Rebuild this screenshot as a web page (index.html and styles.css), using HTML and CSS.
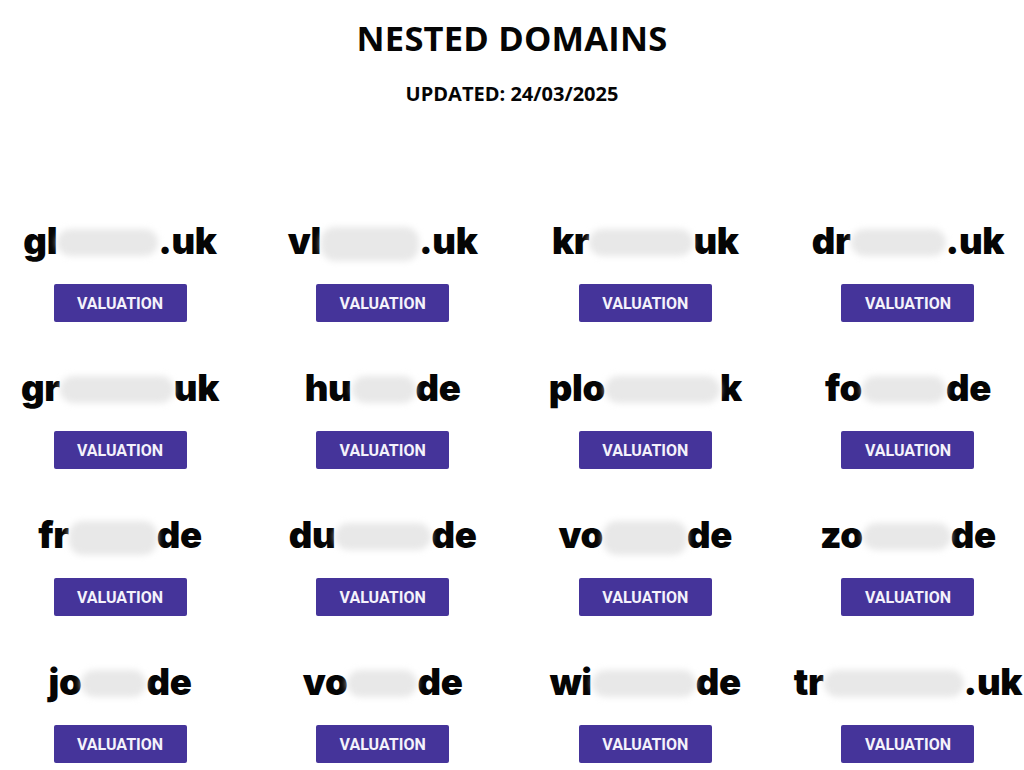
FILE: index.html
```html
<!DOCTYPE html>
<html lang="en">
<head>
<meta charset="utf-8">
<title>Nested Domains</title>
<link rel="stylesheet" href="styles.css">
</head>
<body>
<header class="page-head">
  <h1 class="title">NESTED DOMAINS</h1>
  <p class="updated">UPDATED: 24/03/2025</p>
</header>
<main class="grid">
  <div class="item"><div class="domain">gl<span class="mask" style="width:101px"></span>.uk</div><a class="btn">VALUATION</a></div>
  <div class="item"><div class="domain">vl<span class="mask tall" style="width:98px"></span>.uk</div><a class="btn">VALUATION</a></div>
  <div class="item"><div class="domain">kr<span class="mask" style="width:104px"></span>uk</div><a class="btn">VALUATION</a></div>
  <div class="item"><div class="domain">dr<span class="mask" style="width:95px"></span>.uk</div><a class="btn">VALUATION</a></div>

  <div class="item"><div class="domain">gr<span class="mask" style="width:114px"></span>uk</div><a class="btn">VALUATION</a></div>
  <div class="item"><div class="domain">hu<span class="mask" style="width:64px"></span>de</div><a class="btn">VALUATION</a></div>
  <div class="item"><div class="domain">plo<span class="mask" style="width:115px"></span>k</div><a class="btn">VALUATION</a></div>
  <div class="item"><div class="domain">fo<span class="mask" style="width:84px"></span>de</div><a class="btn">VALUATION</a></div>

  <div class="item"><div class="domain">fr<span class="mask tall" style="width:88px"></span>de</div><a class="btn">VALUATION</a></div>
  <div class="item"><div class="domain">du<span class="mask" style="width:96px"></span>de</div><a class="btn">VALUATION</a></div>
  <div class="item"><div class="domain">vo<span class="mask tall" style="width:84px"></span>de</div><a class="btn">VALUATION</a></div>
  <div class="item"><div class="domain">zo<span class="mask" style="width:88px"></span>de</div><a class="btn">VALUATION</a></div>

  <div class="item"><div class="domain">jo<span class="mask" style="width:65px"></span>de</div><a class="btn">VALUATION</a></div>
  <div class="item"><div class="domain">vo<span class="mask" style="width:70px"></span>de</div><a class="btn">VALUATION</a></div>
  <div class="item"><div class="domain">wi<span class="mask" style="width:104px"></span>de</div><a class="btn">VALUATION</a></div>
  <div class="item"><div class="domain">tr<span class="mask" style="width:140px"></span>.uk</div><a class="btn">VALUATION</a></div>
</main>
</body>
</html>
```
FILE: styles.css
```css
html, body {
  margin: 0;
  padding: 0;
  background: #ffffff;
}
body {
  width: 1024px;
  height: 770px;
  overflow: hidden;
  font-family: "Open Sans", "Liberation Sans", sans-serif;
  color: #050505;
}
.page-head {
  text-align: center;
  padding-top: 16px;
}
.title {
  margin: 0;
  font-size: 34.5px;
  font-weight: 700;
  line-height: 44px;
  letter-spacing: 0.2px;
  color: #050505;
}
.updated {
  margin: 21.5px 0 0 0;
  font-size: 20px;
  font-weight: 700;
  line-height: 24px;
  color: #050505;
}
.grid {
  display: grid;
  grid-template-columns: repeat(4, 240px);
  column-gap: 22.67px;
  row-gap: 44px;
  margin-top: 113.5px;
}
.item {
  display: flex;
  flex-direction: column;
  align-items: center;
}
.domain {
  font-family: Inter, "DejaVu Sans", sans-serif;
  font-size: 36.5px;
  font-weight: 900;
  line-height: 44px;
  color: #050505;
  white-space: nowrap;
  letter-spacing: -0.3px;
}
.mask {
  display: inline-block;
  height: 27px;
  vertical-align: -2px;
  background: #e8e8e8;
  border-radius: 14px;
  filter: blur(3px);
}
.mask.tall {
  height: 34px;
  vertical-align: -7px;
}
.btn {
  margin-top: 21px;
  width: 133px;
  height: 38px;
  display: flex;
  align-items: center;
  justify-content: center;
  background: #45349a;
  border-radius: 2px;
  color: #f4f2fb;
  font-family: Roboto, "Liberation Sans", sans-serif;
  font-size: 16px;
  font-weight: 700;
  text-decoration: none;
}
```
